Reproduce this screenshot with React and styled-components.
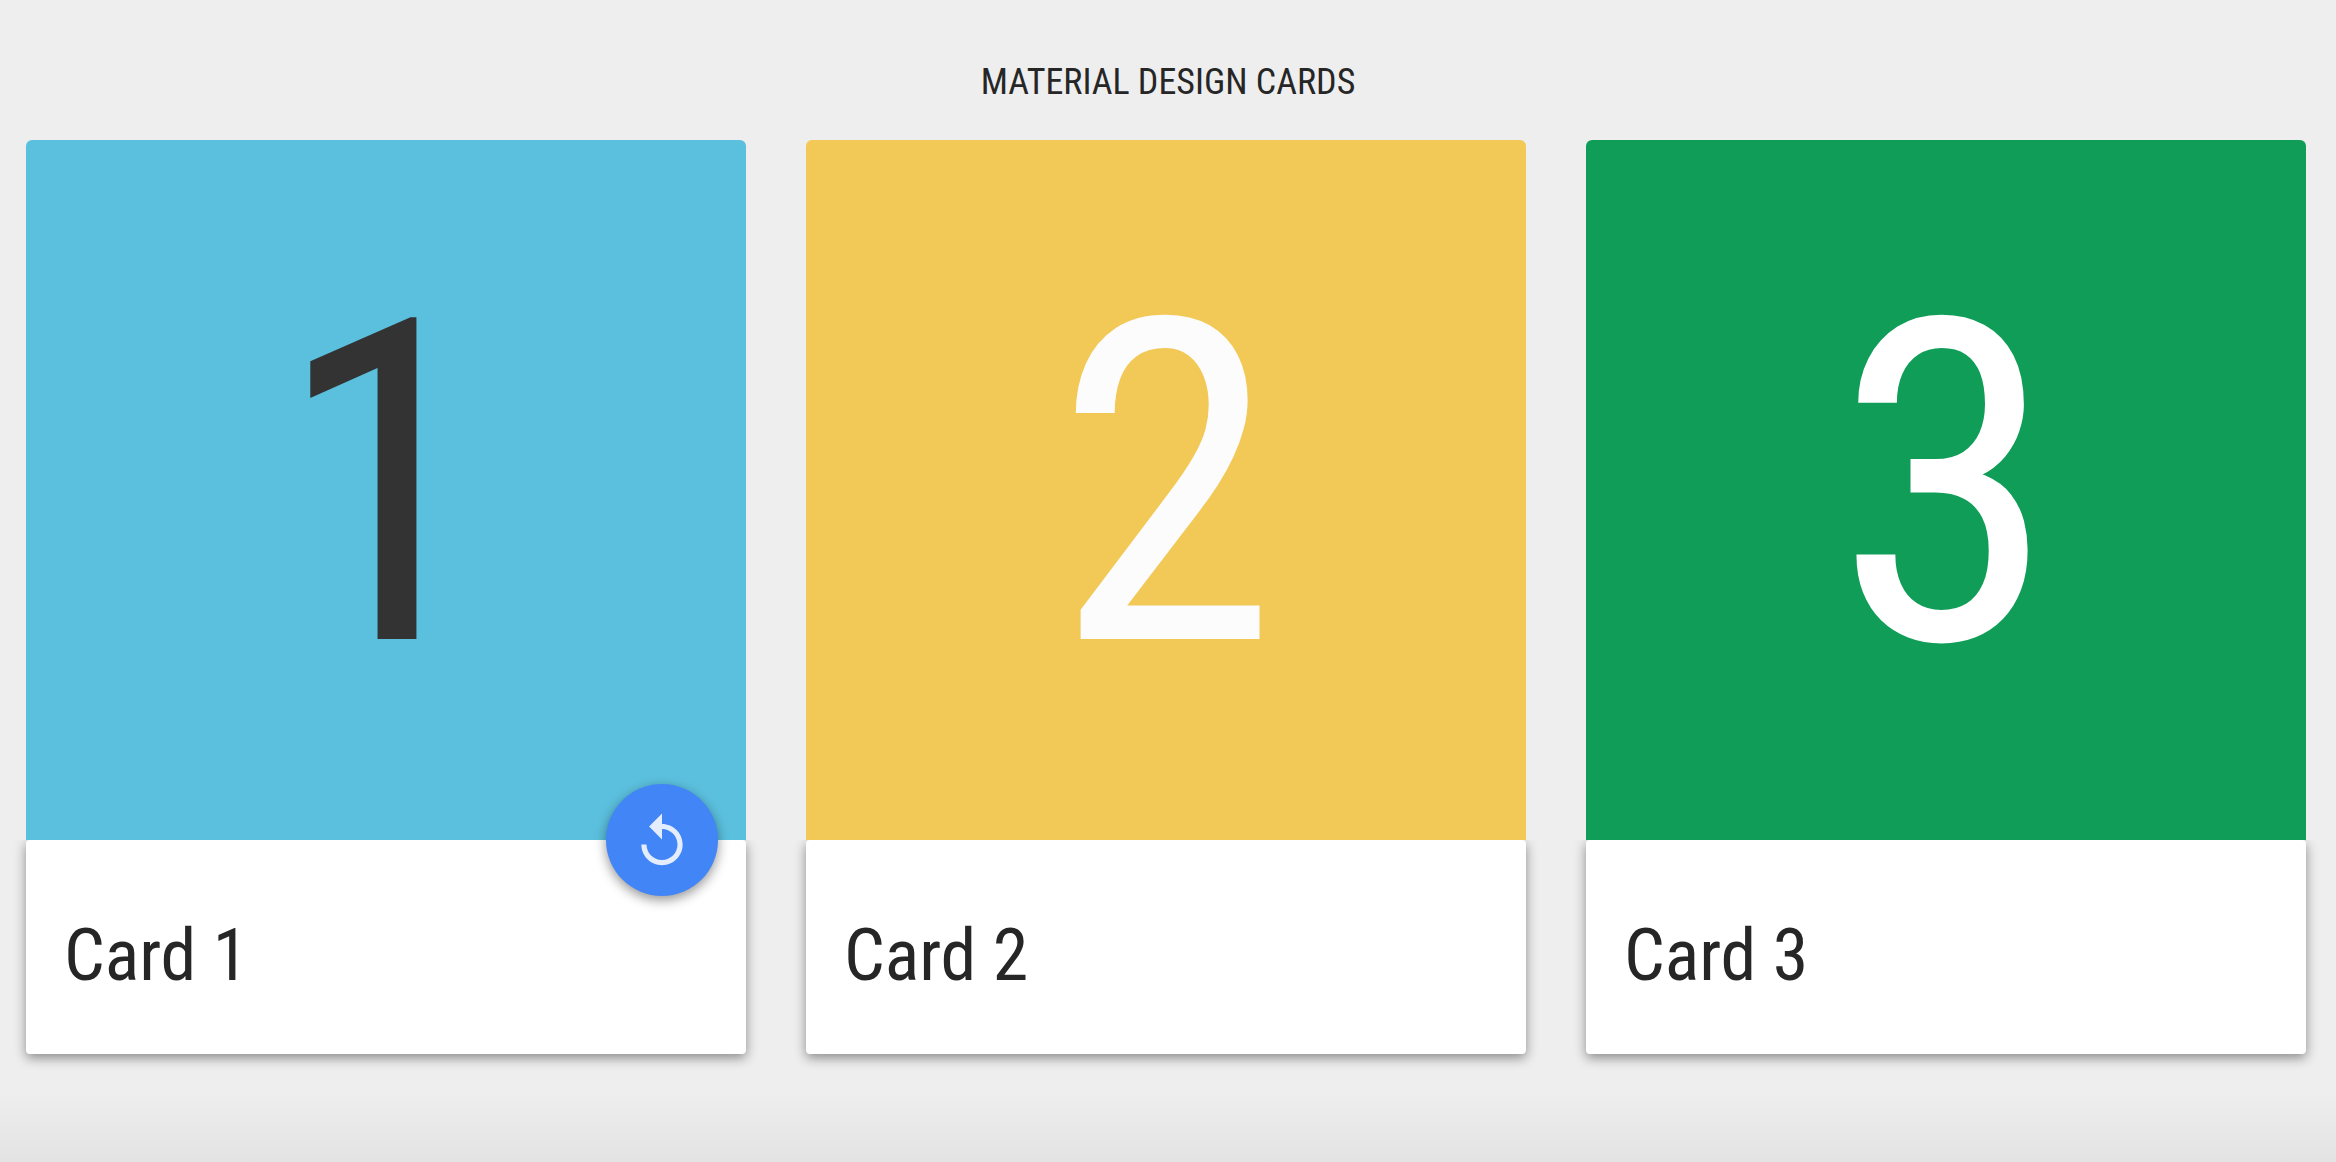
import styled, { createGlobalStyle, ThemeProvider } from 'styled-components';

const theme = {
  colors: {
    page: '#eee',
    pageEdge: '#e3e3e3',
    text: '#262626',
    white: '#fff',
    accent: '#4285f6',
  },
  shadow: '0 4px 12px rgba(0, 0, 0, .42)',
}

const GlobalStyle = createGlobalStyle`
  * {
    box-sizing: border-box;
  }

  body {
    margin: 0;
    font-family: 'Roboto Condensed', Roboto, 'Liberation Sans', sans-serif;
    color: ${({theme})=> theme.colors.text};
    background: ${({theme})=> theme.colors.page};
  }
`

const Page = styled.main`
  min-height: 100vh;
  padding: 60px 0 100px;
  background: linear-gradient(to top, ${({theme})=> `${theme.colors.pageEdge}, ${theme.colors.page} 70px`});
`
const PageTitle = styled.h1`
  margin: 0 0 36px;
  font-size: 36px;
  font-weight: 400;
  line-height: 44px;
  text-align: center;
  text-transform: uppercase;
`
const CardGrid = styled.div`
  display: grid;
  grid-template-columns: repeat(3, 1fr);
  gap: 60px;
  padding: 0 30px 0 26px;
`
const CardMedia = styled.div`
  display: flex;
  align-items: center;
  justify-content: center;
  height: 700px;
  padding-bottom: 8px;
  border-radius: 6px 6px 0 0;
  font-size: 450px;
  line-height: 1;
  color: ${({ink})=> ink};
  background: ${({fill})=> fill};
`
const CardBody = styled.div`
  padding: 72px 38px 54px;
  border-radius: 4px;
  background: ${({theme})=> theme.colors.white};
  box-shadow: ${({theme})=> theme.shadow};
  clip-path: inset(0 -40px -40px);
`
const CardTitle = styled.h2`
  margin: 0;
  font-size: 72px;
  font-weight: 400;
  line-height: 88px;
`
const CardItem = styled.article`
  position: relative;
`
// sits on the seam between the media and the body
const Fab = styled.button`
  position: absolute;
  top: 644px;
  right: 28px;
  display: flex;
  align-items: center;
  justify-content: center;
  width: 112px;
  height: 112px;
  padding: 4px 0 0;
  border: 0;
  border-radius: 50%;
  color: rgba(255, 255, 255, .85);
  background: ${({theme})=> theme.colors.accent};
  box-shadow: ${({theme})=> theme.shadow};
  cursor: pointer;
`

const ReplayIcon = () => (
  <svg width="62" height="62" viewBox="0 0 24 24" fill="currentColor" aria-hidden="true">
    <path d="M12 5V1L7 6l5 5V7c3.31 0 6 2.69 6 6s-2.69 6-6 6-6-2.69-6-6H4c0 4.42 3.58 8 8 8s8-3.58 8-8-3.58-8-8-8z"/>
  </svg>
)

const cards = [
  { number: 1, fill: '#5bc0de', ink: '#333', replay: true },
  { number: 2, fill: '#f2c957', ink: '#fcfcfc' },
  { number: 3, fill: '#0f9d58', ink: '#fff' },
]

const Card = ({ number, fill, ink, replay }) => (
  <CardItem>
    <CardMedia fill={fill} ink={ink}>{number}</CardMedia>
    <CardBody>
      <CardTitle>Card {number}</CardTitle>
    </CardBody>
    {replay && <Fab type="button" aria-label="Replay"><ReplayIcon /></Fab>}
  </CardItem>
)

export default () => (
  <ThemeProvider theme={theme}>
    <GlobalStyle />
    <Page>
      <PageTitle>Material Design Cards</PageTitle>
      <CardGrid>
        {cards.map(card => <Card key={card.number} {...card} />)}
      </CardGrid>
    </Page>
  </ThemeProvider>
)
